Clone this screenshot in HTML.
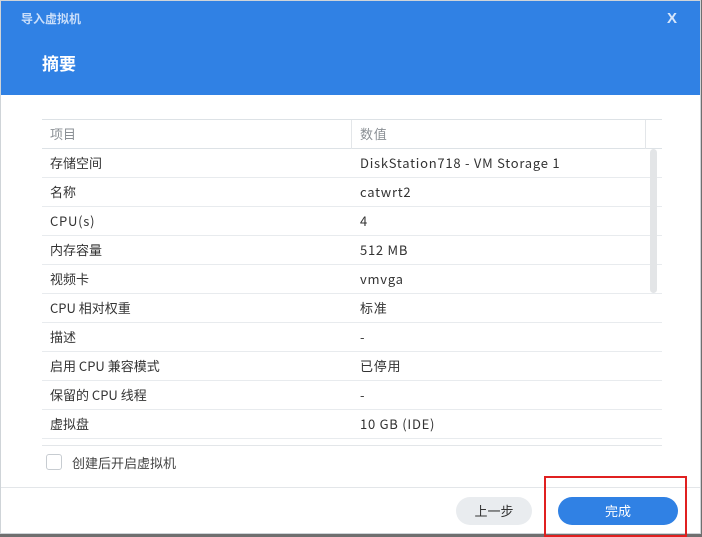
<!DOCTYPE html>
<html><head><meta charset="utf-8"><style>
*{margin:0;padding:0;box-sizing:border-box}
body{width:702px;height:537px;background:#6f6f6f;font-family:"Noto Sans CJK SC","Liberation Sans",sans-serif;position:relative;overflow:hidden}
.dlg{position:absolute;left:0;top:0;width:701px;height:534px;background:#fff;border:1px solid #cfd4d8}
.hd{position:absolute;left:0;top:0;width:100%;height:94px;background:#3081e4}
.t1{position:absolute;left:20px;top:9px;color:#c9defa;font-size:12px;font-weight:bold;line-height:18px}
.x{position:absolute;left:666px;top:9px;color:#d6e6fb;font-size:15px;font-weight:bold;font-family:"Liberation Sans",sans-serif}
.t2{position:absolute;left:41px;top:50px;color:#fff;font-size:17px;font-weight:bold;line-height:24px}
.tbl{position:absolute;left:41px;top:118px;width:620px;border-top:1px solid #dde2e6}
.row{height:29px;border-bottom:1px solid #e8ebee;font-size:13px;color:#333;position:relative}
.row span{position:absolute;top:0;line-height:28px}
.a{left:8px}.b{left:318px;letter-spacing:.75px}
.l{letter-spacing:.75px}
.hr span{color:#8a8f94}
.hr{border-bottom:1px solid #dde2e6}
.sb{position:absolute;left:649px;top:148px;width:7px;height:144px;background:#e3e5e7;border-radius:4px}
.cb{position:absolute;left:45px;top:453px;width:16px;height:16px;border:1px solid #c7ccd1;border-radius:3px}
.cl{position:absolute;left:71px;top:452px;font-size:13px;color:#444;line-height:20px}
.btn{position:absolute;top:496px;height:28px;border-radius:14px;font-size:13px;text-align:center;line-height:28px}
.red{position:absolute;left:544px;top:476px;width:143px;height:61px;border:2px solid #e02020}
</style></head><body>
<div class="dlg">
<div class="hd"><div class="t1">导入虚拟机</div><div class="x">X</div><div class="t2">摘要</div></div>
<div class="tbl">
<div class="row hr"><span class="a">项目</span><span class="b">数值</span><div style="position:absolute;left:309px;top:0;width:1px;height:29px;background:#e3e6e9"></div><div style="position:absolute;left:603px;top:0;width:1px;height:29px;background:#e3e6e9"></div></div>
<div class="row"><span class="a">存储空间</span><span class="b">DiskStation718 - VM Storage 1</span></div>
<div class="row"><span class="a">名称</span><span class="b">catwrt2</span></div>
<div class="row"><span class="a l">CPU(s)</span><span class="b">4</span></div>
<div class="row"><span class="a">内存容量</span><span class="b">512 MB</span></div>
<div class="row"><span class="a">视频卡</span><span class="b">vmvga</span></div>
<div class="row"><span class="a">CPU 相对权重</span><span class="b">标准</span></div>
<div class="row"><span class="a">描述</span><span class="b">-</span></div>
<div class="row"><span class="a">启用 CPU 兼容模式</span><span class="b">已停用</span></div>
<div class="row"><span class="a">保留的 CPU 线程</span><span class="b">-</span></div>
<div class="row"><span class="a">虚拟盘</span><span class="b">10 GB (IDE)</span></div>
</div>
<div style="position:absolute;left:41px;top:444px;width:620px;height:1px;background:#e3e6e9"></div>
<div class="sb"></div>
<div class="cb"></div><div class="cl">创建后开启虚拟机</div>
<div style="position:absolute;left:0;top:486px;width:100%;height:1px;background:#e3e6e9"></div>
<div class="btn" style="left:455px;width:76px;background:#e9ecef;color:#333">上一步</div>
<div class="btn" style="left:557px;width:120px;background:#3081e4;color:#fff">完成</div>
</div>
<div class="red"></div>
</body></html>
